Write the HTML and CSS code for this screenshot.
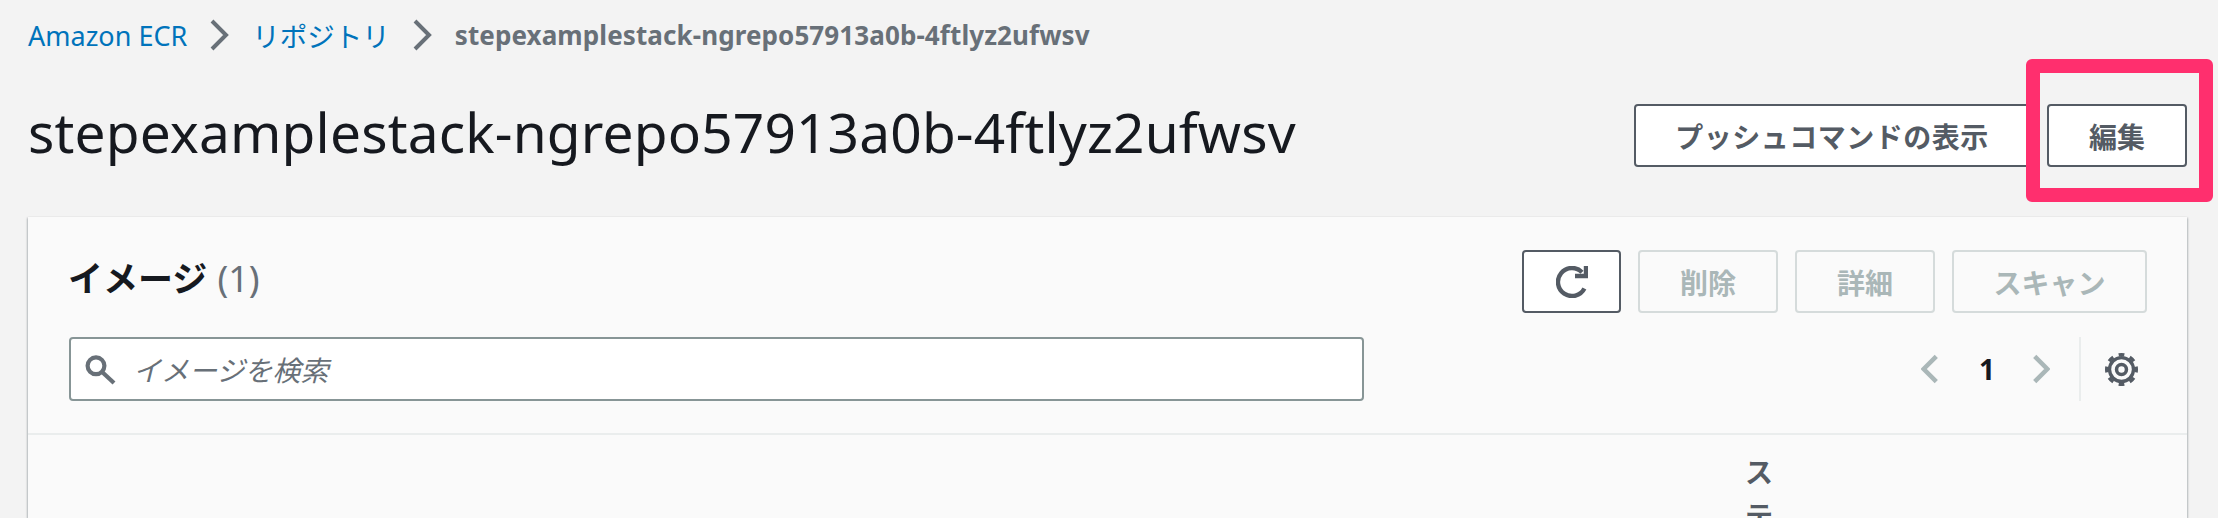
FILE: index.html
```html
<!DOCTYPE html>
<html lang="ja">

<head>
    <meta charset="UTF-8">
    <title>stepexamplestack-ngrepo57913a0b-4ftlyz2ufwsv</title>
    <link rel="stylesheet" href="styles.css">
</head>

<body>
    <div class="page">
        <!-- Breadcrumbs -->
        <nav class="breadcrumbs">
            <a class="crumb-link">Amazon ECR</a>
            <svg class="crumb-sep" viewBox="0 0 20 32"><path d="M3 2l14 14L3 30"/></svg>
            <a class="crumb-link crumb-link-ja">リポジトリ</a>
            <svg class="crumb-sep" viewBox="0 0 20 32"><path d="M3 2l14 14L3 30"/></svg>
            <span class="crumb-current">stepexamplestack-ngrepo57913a0b-4ftlyz2ufwsv</span>
        </nav>

        <!-- Title -->
        <div class="page-header">
            <h1 class="page-title">stepexamplestack-ngrepo57913a0b-4ftlyz2ufwsv</h1>
            <div class="page-actions">
                <button class="btn btn-push">プッシュコマンドの表示</button>
                <button class="btn btn-edit">編集</button>
            </div>
        </div>

        <!-- Images panel -->
        <section class="panel">
            <div class="panel-header">
                <div class="panel-title-row">
                    <h2 class="panel-title">イメージ <span class="panel-count">(1)</span></h2>
                    <div class="panel-actions">
                        <button class="btn btn-refresh">
                            <svg class="icon-refresh" viewBox="0 0 16 16"><path d="M14.2 11.2A7 7 0 1 1 13 3.1"/><path d="M9.5 5h5.5V0"/></svg>
                        </button>
                        <button class="btn btn-disabled btn-delete">削除</button>
                        <button class="btn btn-disabled btn-detail">詳細</button>
                        <button class="btn btn-disabled btn-scan">スキャン</button>
                    </div>
                </div>
                <div class="panel-filter-row">
                    <div class="search-box">
                        <svg class="icon-search" viewBox="0 0 16 16"><circle cx="6" cy="6.4" r="4.2"/><path d="M9.2 9.6L15 15"/></svg>
                        <span class="search-placeholder">イメージを検索</span>
                    </div>
                    <div class="pager">
                        <svg class="pager-arrow" viewBox="0 0 20 32"><path d="M17 2L3 16l14 14"/></svg>
                        <span class="pager-num">1</span>
                        <svg class="pager-arrow" viewBox="0 0 20 32"><path d="M3 2l14 14L3 30"/></svg>
                    </div>
                    <div class="pager-settings">
                        <svg class="icon-gear" viewBox="0 0 16 16">
                            <circle class="gear-ring" cx="8" cy="8" r="5.8"/>
                            <circle class="gear-teeth" cx="8" cy="8" r="7.2" pathLength="32"/>
                            <circle class="gear-hub" cx="8" cy="8" r="2.4"/>
                        </svg>
                    </div>
                </div>
            </div>
            <div class="table-head">
                <div class="col-status">ステータス</div>
            </div>
        </section>

        <div class="highlight"></div>
    </div>
</body>

</html>
```

FILE: styles.css
```css
html,
body {
    margin: 0;
    height: 518px;
    overflow: hidden;
    background: #f3f3f3;
}

body {
    font-family: "Noto Sans", "Noto Sans CJK JP", sans-serif;
    font-size: 28px;
    color: #16191f;
}

.page {
    position: relative;
    padding: 0 31px 0 28px;
}

/* Breadcrumbs */
.breadcrumbs {
    display: flex;
    align-items: center;
    height: 70px;
    white-space: nowrap;
}

.crumb-link {
    color: #0073bb;
    font-size: 27px;
}

.crumb-link-ja {
    font-size: 27.5px;
}

.crumb-current {
    color: #687078;
    font-size: 26px;
    font-weight: 700;
    letter-spacing: 0.1px;
}

.crumb-sep {
    width: 20px;
    height: 32px;
    margin: 0 23px 0 22px;
    fill: none;
    stroke: #687078;
    stroke-width: 4;
}

/* Title */
.page-header {
    display: flex;
    justify-content: space-between;
    align-items: center;
    height: 63px;
    margin-top: 34px;
}

.page-title {
    margin: 0 0 8px;
    font-size: 55px;
    font-weight: 400;
    letter-spacing: 0.16px;
    white-space: nowrap;
}

.page-actions {
    display: flex;
    gap: 17px;
}

.btn {
    height: 63px;
    box-sizing: border-box;
    padding: 0;
    background: #fff;
    border: 2px solid #545b64;
    border-radius: 4px;
    color: #545b64;
    font-family: inherit;
    font-size: 28px;
    font-weight: 700;
}

.btn-push {
    width: 396px;
    letter-spacing: 0.5px;
}

.btn-edit {
    width: 140px;
}

.btn-refresh {
    display: flex;
    align-items: center;
    justify-content: center;
    width: 99px;
}

.btn-disabled {
    background: #fafafa;
    border-color: #d5dbdb;
    color: #aab7b8;
}

.btn-delete,
.btn-detail {
    width: 140px;
}

.btn-scan {
    width: 195px;
}

/* Panel */
.panel {
    margin-top: 50px;
    height: 301px;
    overflow: hidden;
    background: #fafafa;
    box-shadow: 0 1px 2px rgba(0, 28, 36, 0.3), 1px 1px 2px rgba(0, 28, 36, 0.15), -1px 1px 2px rgba(0, 28, 36, 0.15);
}

.panel-header {
    padding: 33px 40px 32px 41px;
    border-bottom: 2px solid #eaeded;
}

.panel-title-row {
    display: flex;
    justify-content: space-between;
    align-items: center;
}

.panel-title {
    margin: 0 0 5px -1px;
    font-size: 35px;
    font-weight: 700;
    line-height: 58px;
}

.panel-count {
    margin-left: 1px;
    color: #687078;
    font-size: 36px;
    font-weight: 400;
}

.panel-actions {
    display: flex;
    gap: 17px;
}

.icon-refresh {
    width: 32px;
    height: 32px;
    fill: none;
    stroke: #545b64;
    stroke-width: 2.2;
}

.panel-filter-row {
    display: flex;
    align-items: center;
    margin-top: 24px;
}

.search-box {
    display: flex;
    align-items: center;
    width: 1295px;
    height: 64px;
    box-sizing: border-box;
    padding-left: 13px;
    background: #fff;
    border: 2px solid #879596;
    border-radius: 4px;
}

.icon-search {
    width: 32px;
    height: 32px;
    fill: none;
    stroke: #687078;
    stroke-width: 2.1;
}

.search-placeholder {
    margin-left: 17px;
    color: #687078;
    font-style: italic;
}

.pager {
    display: flex;
    align-items: center;
    gap: 40px;
    margin-left: 557px;
}

.pager-arrow {
    width: 18px;
    height: 30px;
    fill: none;
    stroke: #aab7b8;
    stroke-width: 5;
}

.pager-num {
    width: 13px;
    font-weight: 700;
    line-height: 1;
}

.pager-settings {
    display: flex;
    align-items: center;
    height: 64px;
    margin-left: 29px;
    padding-left: 24px;
    border-left: 2px solid #eaeded;
}

.icon-gear {
    width: 33px;
    height: 33px;
    fill: none;
    stroke: #545b64;
}

.gear-ring {
    stroke-width: 1.6;
}

.gear-teeth {
    stroke-width: 1.6;
    stroke-dasharray: 2 2;
    stroke-dashoffset: 1;
}

.gear-hub {
    stroke-width: 1.7;
}

/* Table head, the column is so narrow its label breaks per character */
.table-head {
    display: flex;
    justify-content: flex-end;
    padding: 15px 414px 0 0;
}

.col-status {
    width: 28px;
    color: #545b64;
    font-weight: 700;
    line-height: 44px;
    word-break: break-all;
}

/* Annotation over the edit button */
.highlight {
    position: absolute;
    left: 2026px;
    top: 59px;
    width: 187px;
    height: 143px;
    box-sizing: border-box;
    border: 14px solid #ff2f6e;
    border-radius: 6px;
}
```
